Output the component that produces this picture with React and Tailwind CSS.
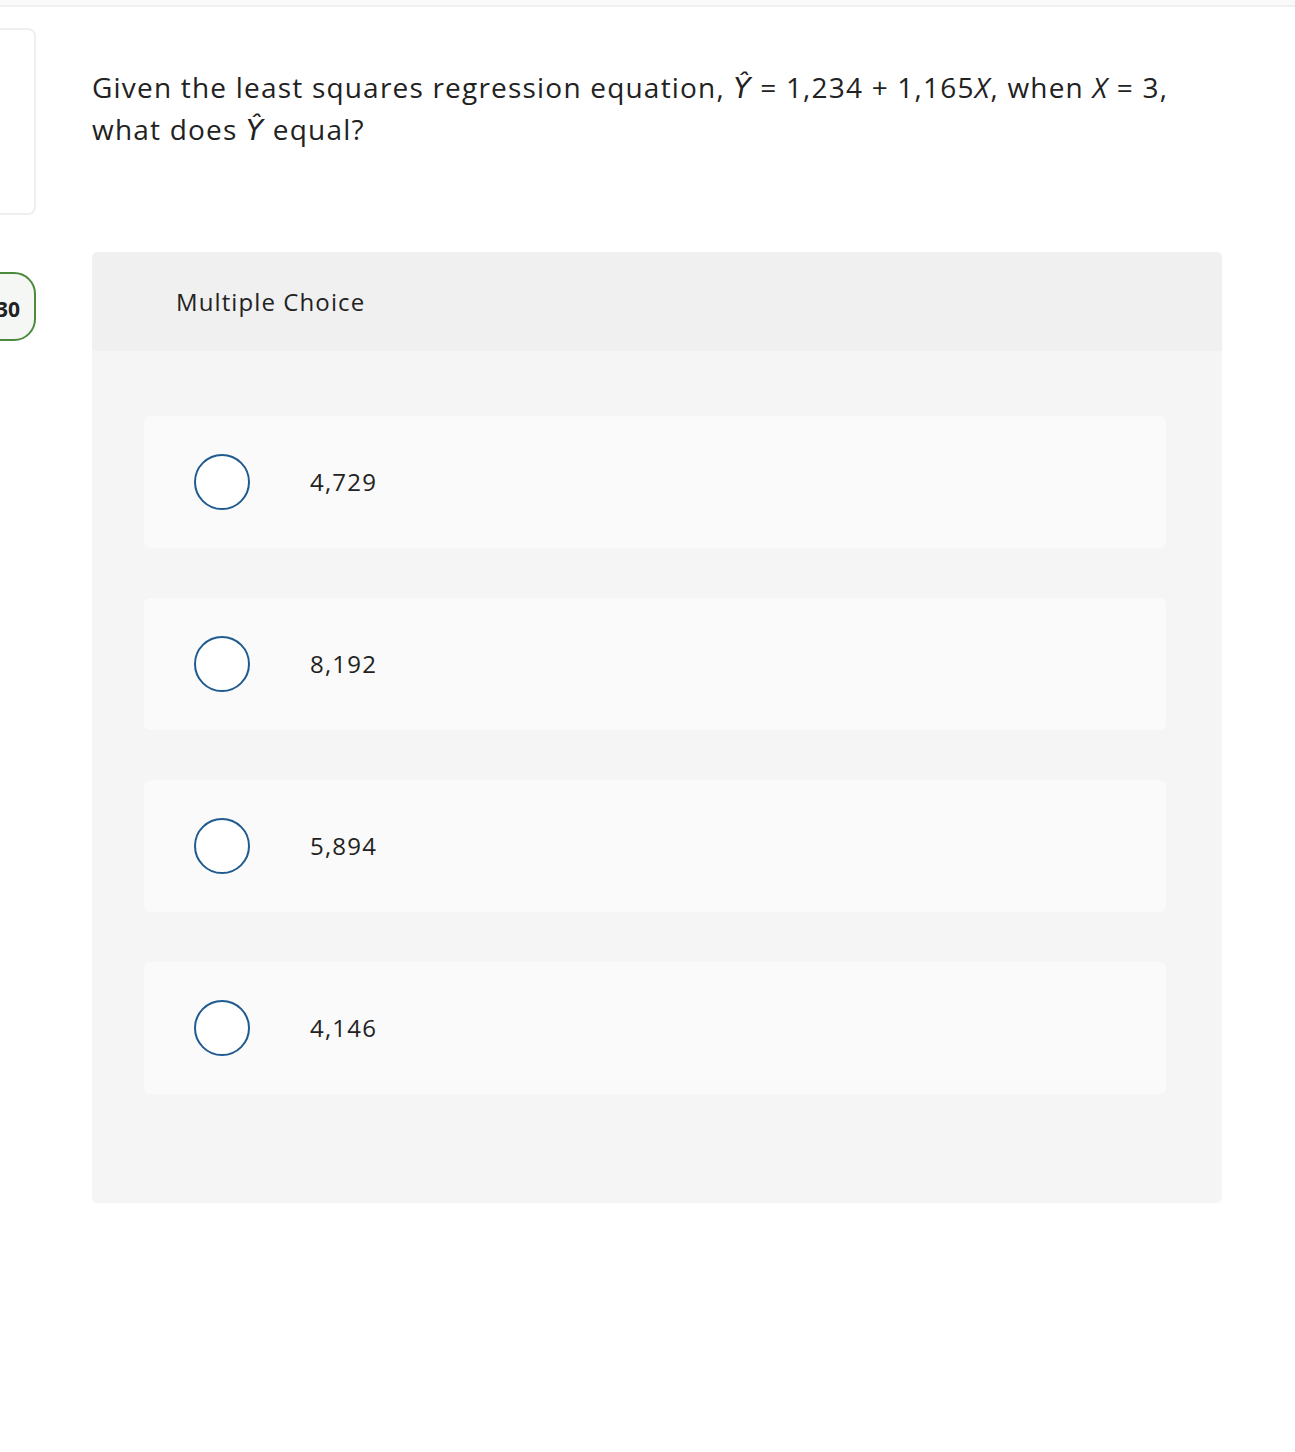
const OPTIONS = ['4,729', '8,192', '5,894', '4,146']

function Hat({ children }) {
  return (
    <span className="italic leading-none" style={{ fontFamily: '"DejaVu Sans", sans-serif' }}>{children}</span>
  )
}

export default function App() {
  return (
    <div className="min-h-[1452px] bg-white text-[#222]" style={{ fontFamily: '"Open Sans", sans-serif' }}>
      {/* top strip */}
      <div className="h-[7px] bg-[#fafafa] border-b-2 border-[#efefef]" />

      {/* question row */}
      <div className="flex pt-[21px]">
        <div className="w-[36px] h-[187px] shrink-0 rounded-r-lg border-2 border-l-0 border-[#efefef] bg-white" />
        <p className="ml-[56px] mt-[38px] mr-[100px] text-[28px] leading-[42px] tracking-[1.2px] text-[#222]">
          Given the least squares regression equation,{' '}
          <Hat>Ŷ</Hat> = 1,234 + 1,165<span className="italic">X</span>, when <span className="italic">X</span> = 3,
          <br />
          what does <Hat>Ŷ</Hat> equal?
        </p>
      </div>

      {/* answer row */}
      <div className="flex mt-[37px]">
        <div className="w-[36px] shrink-0 pt-[20px]">
          <div className="h-[69px] -ml-[34px] w-[70px] rounded-[22px] border-2 border-[#4b8a3d] bg-[#f5f7f5] flex items-center justify-end pr-[14px] pt-[6px]">
            <span className="text-[21px] font-bold text-[#222]">30</span>
          </div>
        </div>

        <div className="ml-[56px] w-[1130px] rounded-[5px] overflow-hidden">
          <div className="h-[99px] bg-[#f0f0f0] flex items-center pl-[84px]">
            <span className="text-[24px] tracking-[1.1px] text-[#222]">Multiple Choice</span>
          </div>
          <div className="bg-[#f5f5f5] pl-[52px] pr-[56px] pt-[65px] pb-[109px] flex flex-col gap-[50px]">
            {OPTIONS.map(o => (
              <div key={o} className="h-[132px] rounded-md bg-[#fafafa] flex items-center pl-[50px]">
                <div className="w-[56px] h-[56px] rounded-full border-2 border-[#1f5b8f] bg-white shrink-0" />
                <span className="ml-[60px] text-[24px] tracking-[1.2px] text-[#222]">{o}</span>
              </div>
            ))}
          </div>
        </div>
      </div>
    </div>
  )
}
